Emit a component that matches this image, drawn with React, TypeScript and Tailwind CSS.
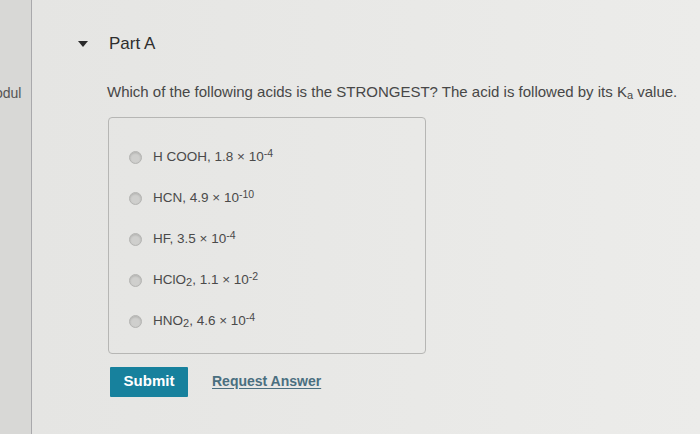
import React from "react";

type Choice = {
  formula: React.ReactNode;
  coef: string;
  exp: string;
};

const choices: Choice[] = [
  { formula: "H COOH", coef: "1.8", exp: "-4" },
  { formula: "HCN", coef: "4.9", exp: "-10" },
  { formula: "HF", coef: "3.5", exp: "-4" },
  {
    formula: (
      <>
        HClO<sub className="text-[11px] relative top-[2px]">2</sub>
      </>
    ),
    coef: "1.1",
    exp: "-2",
  },
  {
    formula: (
      <>
        HNO<sub className="text-[11px] relative top-[2px]">2</sub>
      </>
    ),
    coef: "4.6",
    exp: "-4",
  },
];

function Radio() {
  return (
    <span className="w-[13px] h-[13px] rounded-full border border-[#b4b4b2] bg-[#cfcfcd] shadow-[inset_0_1px_2px_rgba(0,0,0,0.15)] shrink-0" />
  );
}

export default function App() {
  return (
    <div
      className="w-[700px] h-[434px] flex bg-[#e7e7e5] text-[#444] overflow-hidden"
      style={{ fontFamily: '"Liberation Sans", Arial, sans-serif' }}
    >
      {/* module sidebar, cut off at the edge */}
      <aside className="w-[32px] shrink-0 bg-[#d8d8d6] border-r border-[#a9a9ac] overflow-hidden">
        <div className="mt-[83px] -ml-[5px] text-[14px] text-[#555] whitespace-nowrap">odul</div>
      </aside>

      <main className="flex-1 pl-[46px] pt-[34px] bg-gradient-to-r from-[#e5e5e3] to-[#ececea]">
        <div className="flex items-center h-[20px]">
          <span className="w-0 h-0 border-l-[5px] border-r-[5px] border-t-[6px] border-l-transparent border-r-transparent border-t-[#2a2a2a]" />
          <h2 className="ml-[21px] text-[17px] text-[#2e2e2e]">Part A</h2>
        </div>

        <p className="mt-[27px] ml-[29px] text-[15px] text-[#474747] whitespace-nowrap">
          Which of the following acids is the STRONGEST? The acid is followed by its K
          <sub className="text-[11px] relative top-[2px]">a</sub> value.
        </p>

        <div className="mt-[13px] ml-[30px] w-[318px] h-[237px] border border-[#b6b6b4] rounded-[4px] pl-[20px] pt-[31px] flex flex-col gap-[24px]">
          {choices.map((c, i) => (
            <label key={i} className="flex items-center gap-[11px] h-[17px] text-[13.5px] text-[#4a4a4a]">
              <Radio />
              <span className="whitespace-nowrap">
                {c.formula}, {c.coef} × 10
                <sup className="text-[10.5px] relative -top-[4px]">{c.exp}</sup>
              </span>
            </label>
          ))}
        </div>

        <div className="mt-[13px] ml-[32px] flex items-center gap-[24px]">
          <button className="w-[78px] h-[30px] bg-[#17819d] text-white text-[15px] font-bold rounded-[1px]">
            Submit
          </button>
          <a className="text-[14px] font-bold text-[#4a6f80] underline underline-offset-2">
            Request Answer
          </a>
        </div>
      </main>
    </div>
  );
}
